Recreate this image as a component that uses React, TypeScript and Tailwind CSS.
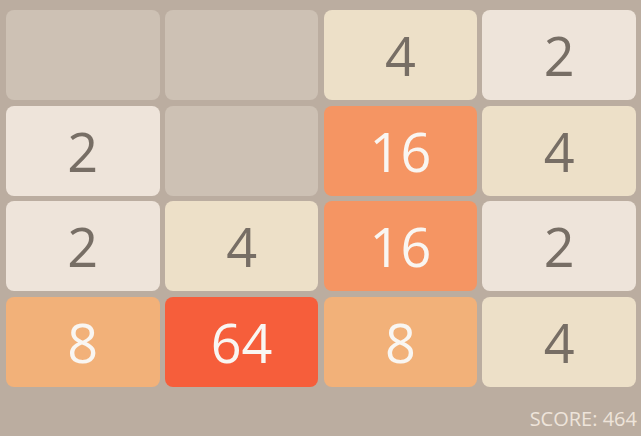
const board: number[][] = [
  [0, 0, 4, 2],
  [2, 0, 16, 4],
  [2, 4, 16, 2],
  [8, 64, 8, 4],
];

const tileClass: Record<number, string> = {
  0: 'bg-[#cdc1b4]',
  2: 'bg-[#eee4da] text-[#776e65]',
  4: 'bg-[#ede0c8] text-[#776e65]',
  8: 'bg-[#f2b179] text-[#f9f6f2]',
  16: 'bg-[#f59563] text-[#f9f6f2]',
  32: 'bg-[#f67c5f] text-[#f9f6f2]',
  64: 'bg-[#f65e3b] text-[#f9f6f2]',
};

function Tile({ value }: { value: number }) {
  return (
    <div
      className={`h-[90px] rounded-lg flex items-center justify-center text-[54px] leading-none ${tileClass[value]}`}
    >
      {value > 0 ? value : ''}
    </div>
  );
}

export default function App() {
  const score = 464;
  return (
    <div
      className="w-[641px] h-[436px] bg-[#bbada0] pt-[10px] pl-[6px] pr-[4px] flex flex-col"
      style={{ fontFamily: '"Open Sans", "Liberation Sans", sans-serif' }}
    >
      <div className="grid grid-cols-4 gap-x-[5.3px] gap-y-[5.67px] mr-[1px]">
        {board.flat().map((v, i) => (
          <Tile key={i} value={v} />
        ))}
      </div>
      <div className="mt-auto pb-[7px] text-right text-[20px] leading-[20px] text-[#eee4da]">
        SCORE: {score}
      </div>
    </div>
  );
}
